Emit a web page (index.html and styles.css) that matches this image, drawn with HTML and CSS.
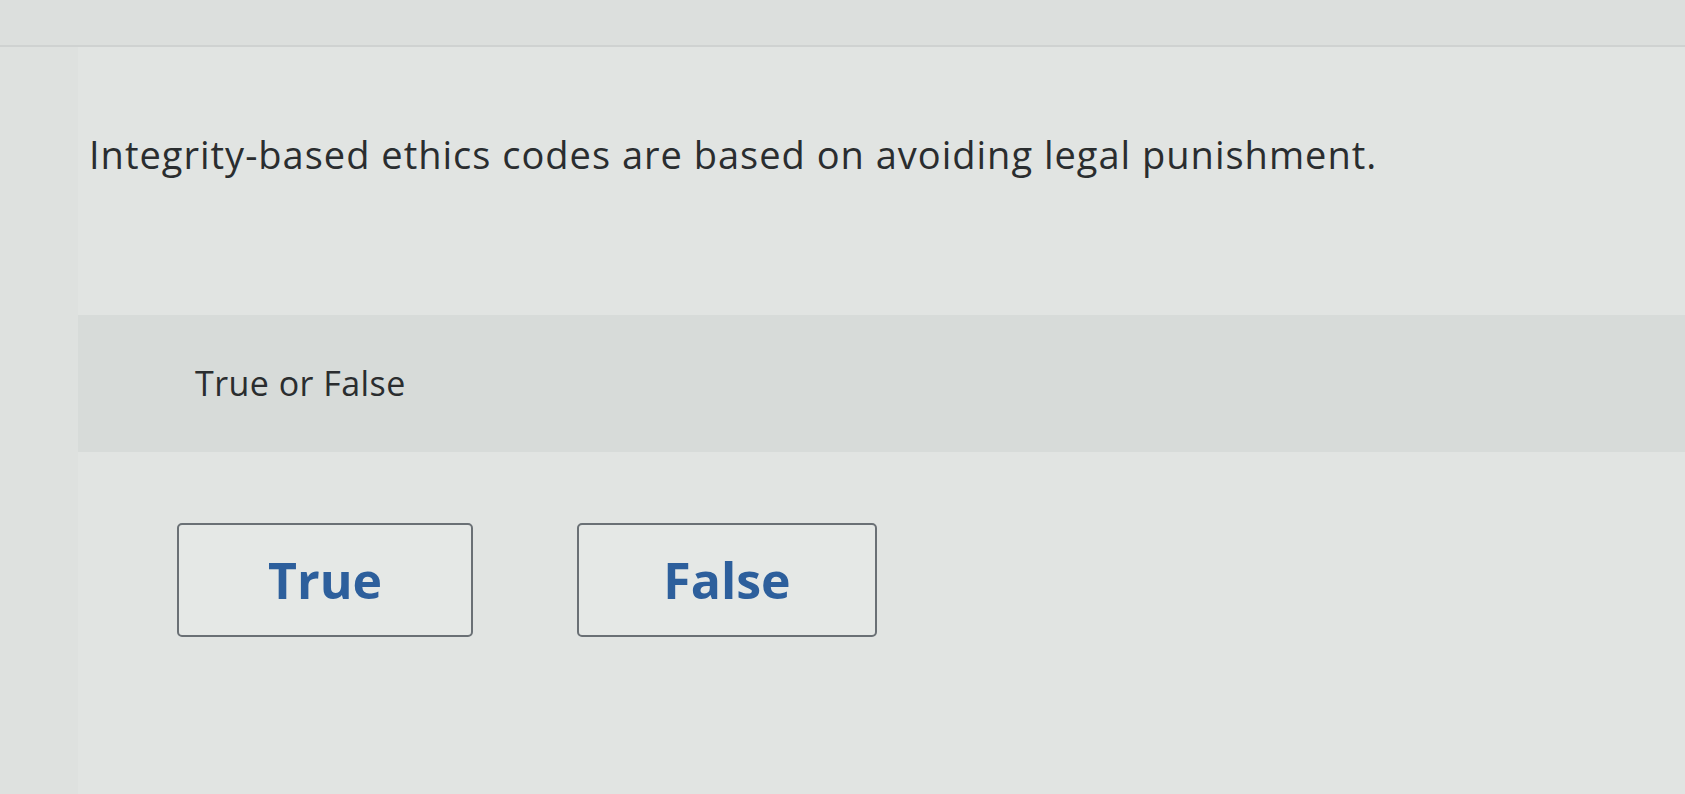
FILE: index.html
```html
<!DOCTYPE html>
<html lang="en">
<head>
<meta charset="utf-8">
<title>True or False</title>
<link rel="stylesheet" href="styles.css">
</head>
<body>
<div class="topbar"></div>
<main class="content">
  <p class="question">Integrity-based ethics codes are based on avoiding legal punishment.</p>
  <div class="prompt">
    <span class="prompt-text">True or False</span>
  </div>
  <div class="choices">
    <button class="choice choice-true" type="button">True</button>
    <button class="choice choice-false" type="button">False</button>
  </div>
</main>
</body>
</html>
```

FILE: styles.css
```css
html, body {
  margin: 0;
  padding: 0;
}
body {
  width: 1685px;
  height: 794px;
  overflow: hidden;
  background: #dee1df;
  font-family: "Open Sans", "Liberation Sans", sans-serif;
  color: #2a2d2f;
}
.topbar {
  height: 45px;
  background: #dcdfdd;
  border-bottom: 2px solid #cfd2d1;
}
.content {
  margin-left: 78px;
  background: #e1e4e2;
  height: 747px;
}
.question {
  margin: 0;
  padding: 81px 0 0 11px;
  font-size: 38px;
  line-height: 52px;
  letter-spacing: 1px;
}
.prompt {
  margin-top: 135px;
  height: 137px;
  background: #d7dbd9;
  display: flex;
  align-items: center;
  padding-left: 117px;
}
.prompt-text {
  font-size: 34px;
  line-height: 40px;
  letter-spacing: 0.45px;
  margin-top: -2px;
}
.choices {
  display: flex;
  gap: 104px;
  margin-top: 71px;
  padding-left: 99px;
}
.choice {
  box-sizing: border-box;
  height: 114px;
  background: #e5e8e6;
  border: 2px solid #6a7075;
  border-radius: 5px;
  font-family: "Open Sans", "Liberation Sans", sans-serif;
  font-weight: 700;
  font-size: 50px;
  color: #2d5f9c;
  padding: 0;
  display: flex;
  align-items: center;
  justify-content: center;
}
.choice-true { width: 296px; }
.choice-false { width: 300px; }
```
